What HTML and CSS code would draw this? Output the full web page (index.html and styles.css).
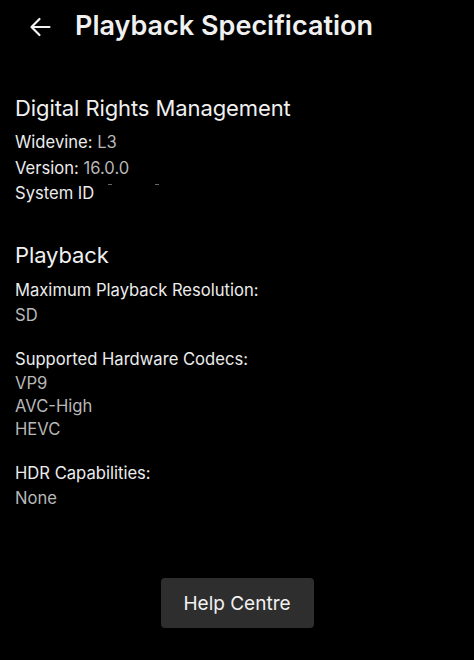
FILE: index.html
```html
<!DOCTYPE html>
<html>
<head>
<meta charset="utf-8">
<link rel="stylesheet" href="styles.css">
</head>
<body>
<div class="screen">
  <header class="topbar">
    <svg class="back" width="22" height="20" viewBox="0 0 22 20"><path d="M20.5 10H2.5M10.5 2L2.5 10l8 8" fill="none" stroke="#f2f2f2" stroke-width="2.2" stroke-linecap="round" stroke-linejoin="round"/></svg>
    <h1 class="title">Playback Specification</h1>
  </header>
  <section class="sec drm">
    <h2 class="heading">Digital Rights Management</h2>
    <div class="lines">
      <div class="line">Widevine: <span class="val">L3</span></div>
      <div class="line">Version: <span class="val">16.0.0</span></div>
      <div class="line">System ID<span class="redact"><i></i><i></i></span></div>
    </div>
  </section>
  <section class="sec play">
    <h2 class="heading">Playback</h2>
    <div class="group">
      <div class="line">Maximum Playback Resolution:</div>
      <div class="line val">SD</div>
    </div>
    <div class="group">
      <div class="line">Supported Hardware Codecs:</div>
      <div class="line val tight">VP9</div>
      <div class="line val tight">AVC-High</div>
      <div class="line val tight">HEVC</div>
    </div>
    <div class="group">
      <div class="line">HDR Capabilities:</div>
      <div class="line val">None</div>
    </div>
  </section>
  <div class="footer">
    <button class="help">Help Centre</button>
  </div>
</div>
</body>
</html>
```
FILE: styles.css
```css
html, body { margin: 0; padding: 0; background: #000; }
body { font-family: Inter, "Noto Sans", sans-serif; color: #ececec; }
.screen { width: 474px; height: 660px; display: flex; flex-direction: column; }
.topbar { display: flex; align-items: center; height: 52px; padding-left: 29px; }
.back { flex: none; margin-right: 24px; margin-top: 1px; }
.title { margin: 0; font-size: 27px; line-height: 52px; font-weight: 600; color: #f0f0f0; letter-spacing: 0; }
.sec { padding-left: 15px; }
.drm { margin-top: 41px; }
.heading { margin: 0; font-size: 22px; font-weight: 400; color: #f0f0f0; line-height: 30px; letter-spacing: -0.1px; }
.drm .lines { margin-top: 7.4px; }
.drm .line { line-height: 25.5px; }
.line { font-size: 16.6px; line-height: 25px; color: #ececec; }
.val { color: #b8b8b8; }
.redact { display: inline-block; position: relative; width: 70px; height: 10px; }
.redact i { position: absolute; top: -5px; width: 4px; height: 1px; background: #666; }
.redact i:first-child { left: 14px; }
.redact i:last-child { left: 61px; }
.play { margin-top: 33.4px; }
.play .heading { margin-bottom: 7.5px; }
.play .group { margin-bottom: 19.5px; }
.line.tight { line-height: 23px; }
.footer { display: flex; justify-content: center; margin-top: auto; padding-bottom: 32px; }
.help { background: #2e2e2e; color: #f2f2f2; border: none; border-radius: 4px; width: 153px; height: 50px; font-family: Inter, "Noto Sans", sans-serif; font-size: 19px; font-weight: 400; padding: 0; }
```
